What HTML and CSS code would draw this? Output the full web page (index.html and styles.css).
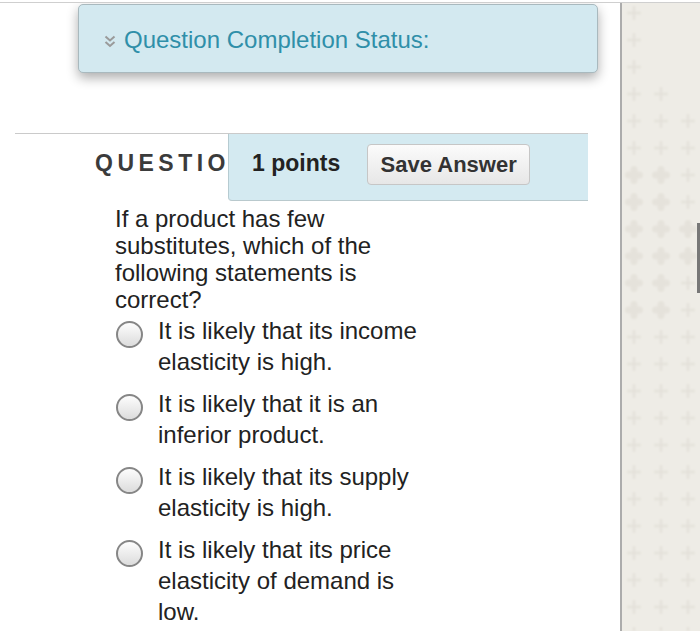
FILE: index.html
```html
<!DOCTYPE html>
<html lang="en">
<head>
    <meta charset="UTF-8">
    <meta name="viewport" content="width=device-width, initial-scale=1.0">
    <title>Question 11</title>
    <link rel="stylesheet" href="styles.css">
</head>
<body>
    <div class="page">
        <main class="content">
            <div class="status-box">
                <svg class="chevrons" width="12" height="13" viewBox="0 0 12 13">
                    <path d="M1.5 1.5 L6 5.5 L10.5 1.5 M1.5 7 L6 11 L10.5 7" fill="none" stroke="#9a9a9a" stroke-width="2"/>
                </svg>
                <span class="status-text">Question Completion Status:</span>
            </div>

            <div class="question-header">
                <h3 class="q-title">QUESTION 11</h3>
                <div class="q-bar">
                    <span class="points">1 points</span>
                    <button type="button" class="save-btn">Save Answer</button>
                </div>
            </div>

            <div class="question-body">
                <p class="question-text">If a product has few substitutes, which of the following statements is correct?</p>
                <ul class="options">
                    <li>
                        <span class="radio"></span>
                        <label>It is likely that its income elasticity is high.</label>
                    </li>
                    <li>
                        <span class="radio"></span>
                        <label>It is likely that it is an inferior product.</label>
                    </li>
                    <li>
                        <span class="radio"></span>
                        <label>It is likely that its supply elasticity is high.</label>
                    </li>
                    <li>
                        <span class="radio"></span>
                        <label>It is likely that its price elasticity of demand is low.</label>
                    </li>
                </ul>
            </div>
        </main>

        <aside class="sidebar">
            <svg class="pattern" width="78" height="628">
                <defs>
                    <filter id="soft">
                        <feGaussianBlur stdDeviation="0.8"/>
                    </filter>
                    <pattern id="plus" x="0" y="-4" width="27" height="27" patternUnits="userSpaceOnUse">
                        <path d="M12 7 V21 M5 14 H19" stroke="#e4e1da" stroke-width="2.5"/>
                    </pattern>
                    <pattern id="blob" x="0" y="-4" width="27" height="27" patternUnits="userSpaceOnUse">
                        <path d="M12 8.5 V19.5 M6.5 14 H17.5" stroke="#e5e2db" stroke-width="7" stroke-linecap="round"/>
                    </pattern>
                </defs>
                <g filter="url(#soft)">
                    <rect width="78" height="628" fill="url(#plus)"/>
                    <rect x="26" y="0" width="52" height="78" fill="#eeece6"/>
                    <rect x="53" y="78" width="25" height="27" fill="#eeece6"/>
                    <rect x="0" y="157" width="53" height="162" fill="#eeece6"/>
                    <rect x="0" y="157" width="53" height="162" fill="url(#blob)"/>
                    <rect x="53" y="211" width="25" height="54" fill="#eeece6"/>
                    <rect x="53" y="211" width="25" height="54" fill="url(#blob)"/>
                </g>
            </svg>
            <div class="scroll-thumb"></div>
        </aside>
    </div>
</body>
</html>
```

FILE: styles.css
```css
* {
    box-sizing: border-box;
    margin: 0;
    padding: 0;
    font-family: "Liberation Sans", Arial, sans-serif;
}

body {
    background: white;
    padding-top: 2px;
}

.page {
    display: flex;
    height: 629px;
    border-top: 1px solid #cfcfcf;
    overflow: hidden;
}

.content {
    width: 620px;
    background: white;
}

/* completion status panel */
.status-box {
    display: flex;
    align-items: center;
    gap: 8px;
    width: 520px;
    height: 69px;
    margin: 1px 0 0 78px;
    padding: 2px 0 0 25px;
    background: #d3e9f0;
    border: 1px solid #a9b9be;
    border-radius: 5px;
    box-shadow: 0 5px 12px rgba(0, 0, 0, 0.32);
}

.chevrons {
    flex: none;
    margin-top: 3px;
}

.status-text {
    font-size: 24px;
    color: #2f8fa9;
}

/* question header */
.question-header {
    display: flex;
    width: 573px;
    height: 68px;
    margin: 60px 0 0 15px;
    border-top: 1px solid #cacaca;
}

.q-title {
    width: 213px;
    padding: 16px 0 0 80px;
    overflow: hidden;
    white-space: nowrap;
    font-size: 23px;
    line-height: 26px;
    font-weight: bold;
    letter-spacing: 4.5px;
    color: #3b3b3b;
}

.q-bar {
    flex: 1;
    display: flex;
    align-items: flex-start;
    padding: 10px 0 0 23px;
    background: #d4eaf1;
    border-left: 1px solid #b6cbd1;
    border-bottom: 1px solid #b9c9cd;
    border-bottom-left-radius: 4px;
}

.points {
    margin-top: 6px;
    font-size: 23px;
    font-weight: bold;
    color: #222;
}

.save-btn {
    width: 163px;
    height: 41px;
    margin-left: 27px;
    font-size: 22px;
    font-weight: bold;
    color: #333;
    background: linear-gradient(#fbfbfb, #e7e7e7);
    border: 1px solid #c6c6c6;
    border-radius: 4px;
}

/* question body */
.question-body {
    padding: 4px 0 0 115px;
}

.question-text {
    width: 275px;
    margin-bottom: 2px;
    font-size: 24px;
    line-height: 27px;
    color: #222;
}

.options {
    list-style: none;
}

.options li {
    display: flex;
    gap: 15px;
    margin-bottom: 11px;
}

.radio {
    flex: none;
    width: 27px;
    height: 27px;
    margin: 6px 0 0 1px;
    border: 2px solid #868686;
    border-radius: 50%;
    background: linear-gradient(#fdfdfd, #dcdcdc);
}

.options label {
    width: 272px;
    font-size: 24px;
    line-height: 31px;
    color: #222;
}

/* right rail */
.sidebar {
    position: relative;
    width: 80px;
    background: #eeece6;
    border-left: 2px solid #acacac;
}

.pattern {
    display: block;
}

.scroll-thumb {
    position: absolute;
    top: 220px;
    right: 0;
    width: 3px;
    height: 70px;
    background: #777;
}
```
